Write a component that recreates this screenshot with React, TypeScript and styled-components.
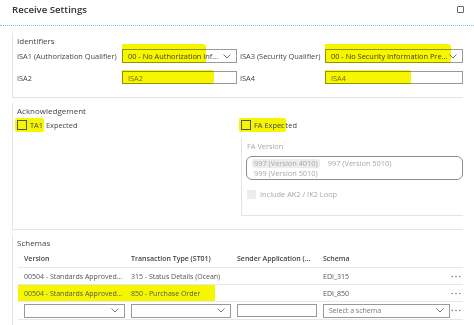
import styled, { createGlobalStyle } from "styled-components"
import { FC } from "react"

const GlobalStyle = createGlobalStyle`
  html, body {
    margin: 0;
    padding: 0;
    background: #fff;
  }
  body {
    width: 474px;
    height: 325px;
    overflow: hidden;
    font-family: "Open Sans", "Noto Sans", sans-serif;
    font-size: 7.4px;
    color: #333;
  }
  * {
    box-sizing: border-box;
  }
`

const Header = styled.div`
    height: 26px;
    display: flex;
    justify-content: space-between;
    align-items: flex-start;
    padding: 4px 10px 0 12px;
    border-bottom: 1px dotted #8cbde3;
`

const Title = styled.h1`
    margin: 0;
    font-size: 9.6px;
    line-height: 12px;
    font-weight: 600;
    color: #333;
`

const MaxIcon = styled.span`
    width: 7px;
    height: 7px;
    margin-top: 2px;
    border: 1px solid #666;
    border-radius: 1px;
`

const Body = styled.div`
    padding: 0 11px 0 12px;
`

const Section = styled.section<{ $top: number; $bottom: number }>`
    margin-top: ${p => p.$top}px;
    padding: 3px 0 ${p => p.$bottom}px 4px;
    border-left: 1px solid #e4e4e4;
    border-bottom: 1px solid #e4e4e4;
`

const SectionTitle = styled.div`
    font-size: 8px;
    line-height: 10px;
    color: #444;
`

const IdGrid = styled.div`
    display: grid;
    grid-template-columns: 105px 115px 88px 138px;
    row-gap: 8px;
    align-items: center;
    margin-top: 3px;
`

const FieldLabel = styled.span<{ $pad?: number }>`
    padding-left: ${p => p.$pad || 0}px;
    color: #444;
    white-space: nowrap;
`

const Control = styled.div<{ $h: number }>`
    position: relative;
    height: ${p => p.$h}px;
    display: flex;
    align-items: center;
    justify-content: space-between;
    padding: 0 5px 0 5px;
    border: 1px solid #9a9a9a;
    background: #fff;
    color: #444;
    white-space: nowrap;
`

const ControlText = styled.span<{ $muted?: boolean }>`
    overflow: hidden;
    text-overflow: ellipsis;
    color: ${p => (p.$muted ? "#777" : "#444")};
`

/* highlighter stroke laid over the screenshot */
const Marker = styled.span<{ $w: number; $top: number; $h: number }>`
    position: absolute;
    left: -1px;
    top: ${p => p.$top}px;
    width: ${p => p.$w}px;
    height: ${p => p.$h}px;
    background: #f6f600;
    mix-blend-mode: multiply;
    border-radius: 0 3px 2px 0;
    pointer-events: none;
`

const Chevron: FC = () => (
    <svg width="8" height="5" viewBox="0 0 8 5">
        <path d="M0.5 0.5 L4 4 L7.5 0.5" fill="none" stroke="#666" strokeWidth="0.9" />
    </svg>
)

const Dots: FC = () => (
    <svg width="10" height="3" viewBox="0 0 10 3">
        <circle cx="1.2" cy="1.5" r="0.8" fill="#777" />
        <circle cx="5" cy="1.5" r="0.8" fill="#777" />
        <circle cx="8.8" cy="1.5" r="0.8" fill="#777" />
    </svg>
)

interface SelectProps {
    text?: string
    placeholder?: boolean
    mark?: number
}

const Select: FC<SelectProps> = ({ text, placeholder, mark }) => (
    <Control $h={14}>
        <ControlText $muted={placeholder}>{text}</ControlText>
        <Chevron />
        {mark ? <Marker $w={mark} $top={-6} $h={19} /> : null}
    </Control>
)

const TextInput: FC<{ text?: string; mark?: number }> = ({ text, mark }) => (
    <Control $h={13}>
        <ControlText $muted>{text}</ControlText>
        {mark ? <Marker $w={mark} $top={-2} $h={14} /> : null}
    </Control>
)

const AckGrid = styled.div`
    display: grid;
    grid-template-columns: 224px 222px;
    margin-top: 3px;
`

const CheckRow = styled.div<{ $muted?: boolean }>`
    display: flex;
    align-items: center;
    height: 12px;
    color: ${p => (p.$muted ? "#a8a8a8" : "#444")};
`

const Box = styled.span<{ $disabled?: boolean }>`
    width: ${p => (p.$disabled ? 9 : 10)}px;
    height: ${p => (p.$disabled ? 9 : 10)}px;
    margin-right: 3px;
    border: ${p => (p.$disabled ? "none" : "1px solid #555")};
    background: ${p => (p.$disabled ? "#ececec" : "transparent")};
    flex-shrink: 0;
`

const Mark = styled.span`
    display: inline-flex;
    align-items: center;
    height: 14px;
    margin-left: -2px;
    padding: 0 1px 0 2px;
    background: #f6f600;
    border-radius: 2px;
`

const SubPanel = styled.div`
    margin-top: 7px;
    padding: 3px 0 15px 4px;
    border-left: 1px solid #e4e4e4;
    border-bottom: 1px solid #e4e4e4;
`

const MutedLabel = styled.div`
    padding-left: 1px;
    line-height: 10px;
    color: #a8a8a8;
`

const MultiBox = styled.div`
    margin-top: 5px;
    height: 24px;
    padding: 2px 5px;
    display: flex;
    flex-wrap: wrap;
    align-content: flex-start;
    column-gap: 6px;
    row-gap: 1px;
    border: 1px solid #8e8e8e;
    border-radius: 6px;
    color: #a8a8a8;
`

const Chip = styled.span<{ $active?: boolean }>`
    line-height: 9px;
    padding: 0 2px;
    border-radius: 3px;
    background: ${p => (p.$active ? "#ececec" : "transparent")};
    white-space: nowrap;
`

const IncludeRow = styled(CheckRow)`
    margin-top: 8px;
    padding-left: 1px;
    & > span:first-child {
        margin-right: 4px;
    }
`

const Table = styled.div`
    margin: 2px 0 0 1px;
    font-size: 7px;
`

const Row = styled.div<{ $h: number; $mark?: number }>`
    display: grid;
    grid-template-columns: 107px 106px 86px 133px 13px;
    align-items: center;
    height: ${p => p.$h}px;
    border-bottom: 1px solid #e8e8e8;
    background: ${p =>
        p.$mark ? `linear-gradient(90deg, #f6f600 ${p.$mark}px, transparent ${p.$mark}px)` : "none"};
`

const Cell = styled.div<{ $head?: boolean }>`
    padding-left: 6px;
    white-space: nowrap;
    font-weight: ${p => (p.$head ? 600 : 400)};
    color: ${p => (p.$head ? "#444" : "#555")};
`

const ActionCell = styled.div`
    display: flex;
    justify-content: flex-start;
    padding-left: 1px;
`

const App: FC = () => {
    const rows: { version: string; type: string; schema: string; mark?: number }[] = [
        { version: "00504 - Standards Approved...", type: "315 - Status Details (Ocean)", schema: "EDI_315" },
        { version: "00504 - Standards Approved...", type: "850 - Purchase Order", schema: "EDI_850", mark: 197 },
    ]

    return (
        <>
            <GlobalStyle />
            <Header>
                <Title>Receive Settings</Title>
                <MaxIcon />
            </Header>
            <Body>
                <Section $top={7} $bottom={13}>
                    <SectionTitle>Identifiers</SectionTitle>
                    <IdGrid>
                        <FieldLabel>ISA1 (Authorization Qualifier)</FieldLabel>
                        <Select text="00 - No Authorization Inf..." mark={84} />
                        <FieldLabel $pad={3}>ISA3 (Security Qualifier)</FieldLabel>
                        <Select text="00 - No Security Information Pre..." mark={126} />

                        <FieldLabel>ISA2</FieldLabel>
                        <TextInput text="ISA2" mark={92} />
                        <FieldLabel $pad={3}>ISA4</FieldLabel>
                        <TextInput text="ISA4" mark={86} />
                    </IdGrid>
                </Section>

                <Section $top={5} $bottom={13}>
                    <SectionTitle>Acknowledgement</SectionTitle>
                    <AckGrid>
                        <div>
                            <CheckRow>
                                <Mark>
                                    <Box />
                                    TA1
                                </Mark>
                                &nbsp;Expected
                            </CheckRow>
                        </div>
                        <div>
                            <CheckRow>
                                <Mark>
                                    <Box />
                                    FA Expec
                                </Mark>
                                ted
                            </CheckRow>
                            <SubPanel>
                                <MutedLabel>FA Version</MutedLabel>
                                <MultiBox>
                                    <Chip $active>997 (Version 4010)</Chip>
                                    <Chip>997 (Version 5010)</Chip>
                                    <Chip>999 (Version 5010)</Chip>
                                </MultiBox>
                                <IncludeRow $muted>
                                    <Box $disabled />
                                    Include AK2 / IK2 Loop
                                </IncludeRow>
                            </SubPanel>
                        </div>
                    </AckGrid>
                </Section>

                <Section $top={5} $bottom={10}>
                    <SectionTitle>Schemas</SectionTitle>
                    <Table>
                        <Row $h={18}>
                            <Cell $head>Version</Cell>
                            <Cell $head>Transaction Type (ST01)</Cell>
                            <Cell $head>Sender Application (...</Cell>
                            <Cell $head>Schema</Cell>
                            <div />
                        </Row>
                        {rows.map((r, i) => (
                            <Row key={i} $h={17} $mark={r.mark}>
                                <Cell>{r.version}</Cell>
                                <Cell>{r.type}</Cell>
                                <Cell />
                                <Cell>{r.schema}</Cell>
                                <ActionCell>
                                    <Dots />
                                </ActionCell>
                            </Row>
                        ))}
                        <Row $h={18}>
                            <Cell>
                                <Select />
                            </Cell>
                            <Cell>
                                <Select />
                            </Cell>
                            <Cell>
                                <TextInput />
                            </Cell>
                            <Cell>
                                <Select text="Select a schema" placeholder />
                            </Cell>
                            <ActionCell>
                                <Dots />
                            </ActionCell>
                        </Row>
                    </Table>
                </Section>
            </Body>
        </>
    )
}

export default App
